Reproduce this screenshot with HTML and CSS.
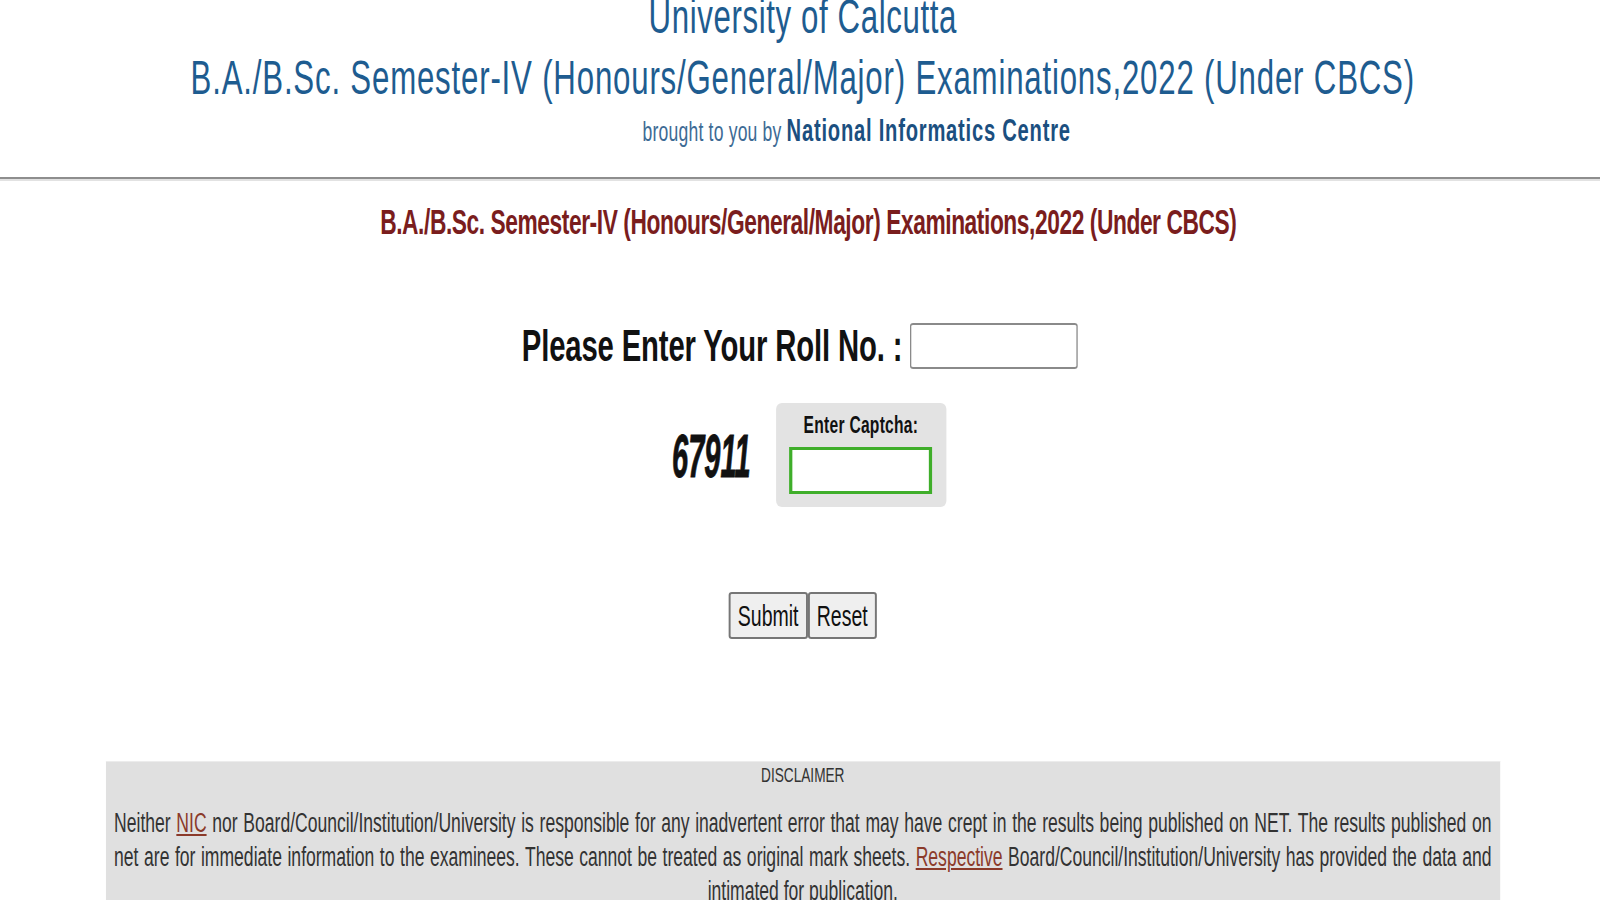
FILE: index.html
```html
<!DOCTYPE html>
<html lang="en">
<head>
    <meta charset="UTF-8">
    <meta name="viewport" content="width=device-width, initial-scale=1.0">
    <title>University of Calcutta - Results</title>
    <link rel="stylesheet" href="styles.css">
</head>
<body>
    <div class="page">
        <div class="masthead">
            <div class="univ">University of Calcutta</div>
            <div class="exam-name">B.A./B.Sc. Semester-IV (Honours/General/Major) Examinations,2022 (Under CBCS)</div>
            <div class="credit">brought to you by <b>National Informatics Centre</b></div>
        </div>
        <hr class="rule">

        <h2 class="exam-title">B.A./B.Sc. Semester-IV (Honours/General/Major) Examinations,2022 (Under CBCS)</h2>

        <!-- Roll number form -->
        <form class="result-form" onsubmit="return false;">
            <div class="roll-row">
                <label for="rollNo">Please Enter Your Roll No. :</label>
                <input type="text" id="rollNo" class="roll-input">
            </div>
            <div class="captcha-row">
                <div class="captcha-code"><span>67911</span></div>
                <div class="captcha-box">
                    <label for="captcha">Enter Captcha:</label>
                    <input type="text" id="captcha" class="captcha-input">
                </div>
            </div>
            <div class="buttons">
                <button type="submit">Submit</button><button type="reset">Reset</button>
            </div>
        </form>

        <div class="disclaimer">
            <div class="disclaimer-head">DISCLAIMER</div>
            <p>Neither <a href="#">NIC</a> nor Board/Council/Institution/University is responsible for any inadvertent error that may have crept in the results being published on NET. The results published on net are for immediate information to the examinees. These cannot be treated as original mark sheets. <a href="#">Respective</a> Board/Council/Institution/University has provided the data and intimated for publication.</p>
        </div>
    </div>
</body>
</html>
```

FILE: styles.css
```css
html, body {
    margin: 0;
    overflow: hidden;
    background: white;
}
/* the whole page is drawn narrow, like the original capture */
.page {
    width: 2462px;
    padding-left: 4px;
    transform: scaleX(0.65);
    transform-origin: 0 0;
    font-family: "Liberation Sans", Arial, sans-serif;
    text-align: center;
}
.masthead {
    color: #1e5c90;
}
.univ {
    font-size: 48px;
    line-height: 59px;
    margin-top: -13px;
    letter-spacing: 0.95px;
}
.exam-name {
    font-size: 48px;
    line-height: 59px;
    margin-top: 2px;
    letter-spacing: 1.25px;
}
.credit {
    font-size: 27px;
    line-height: 40px;
    margin-top: 4px;
    padding-left: 166px;
    color: #3d6b95;
    letter-spacing: 0.3px;
}
.credit b {
    font-size: 31px;
    color: #1b4f80;
    letter-spacing: 1.2px;
}
.rule {
    height: 0;
    margin: 25px 0 0 -4px;
    border: 0;
    border-top: 2px solid #8e8e8e;
    border-bottom: 2px solid #e2e2e2;
}
.exam-title {
    font-size: 35px;
    line-height: 40px;
    margin: 21px 0 0;
    padding-left: 17px;
    color: #7a1d1d;
    letter-spacing: -0.65px;
}
.roll-row {
    display: flex;
    justify-content: center;
    align-items: center;
    gap: 12px;
    margin-top: 78px;
    padding-right: 9px;
}
.roll-row label {
    font-size: 45px;
    font-weight: bold;
    color: #111;
    letter-spacing: -0.2px;
}
.roll-input {
    width: 258px;
    height: 46px;
    box-sizing: border-box;
    border: 2px solid #8a8a8a;
    border-radius: 5px / 3px;
}
.captcha-row {
    display: flex;
    justify-content: center;
    align-items: center;
    gap: 38px;
    margin-top: 31px;
    padding-left: 19px;
}
.captcha-code {
    width: 122px;
    text-align: left;
}
.captcha-code span {
    display: inline-block;
    font-size: 62px;
    font-weight: bold;
    font-style: italic;
    color: #111;
    -webkit-text-stroke: 1px #111;
    transform: scaleX(0.72);
    transform-origin: 0 50%;
}
.captcha-box {
    width: 262px;
    height: 104px;
    box-sizing: border-box;
    padding: 8px 20px 0;
    background: #e3e3e3;
    border-radius: 9px / 6px;
}
.captcha-box label {
    display: block;
    font-size: 24px;
    line-height: 28px;
    font-weight: bold;
    color: #111;
    letter-spacing: 0.4px;
}
.captcha-input {
    display: block;
    width: 220px;
    height: 47px;
    box-sizing: border-box;
    margin-top: 8px;
    border-style: solid;
    border-color: #3fae2a;
    border-width: 3px 5px;
    background: white;
}
.buttons {
    margin-top: 85px;
    font-size: 0;
}
.buttons button {
    height: 47px;
    padding: 0 11px;
    margin: 0;
    font-family: "Liberation Sans", Arial, sans-serif;
    font-size: 30px;
    color: #111;
    background: #efefef;
    border-style: solid;
    border-color: #767676;
    border-width: 2px 3px;
    border-radius: 5px / 3px;
}
.disclaimer {
    width: 2145px;
    margin: 122px auto 0;
    padding: 0 13px 20px;
    box-sizing: border-box;
    background: #e0e0e0;
    border-top: 1px solid #ececec;
    color: #333;
}
.disclaimer-head {
    font-size: 21px;
    line-height: 24px;
    padding-top: 1px;
}
.disclaimer p {
    margin: 19px 0 0;
    font-size: 27px;
    line-height: 34px;
    text-align: justify;
    text-align-last: center;
}
.disclaimer a {
    color: #8b3a2a;
}
```
